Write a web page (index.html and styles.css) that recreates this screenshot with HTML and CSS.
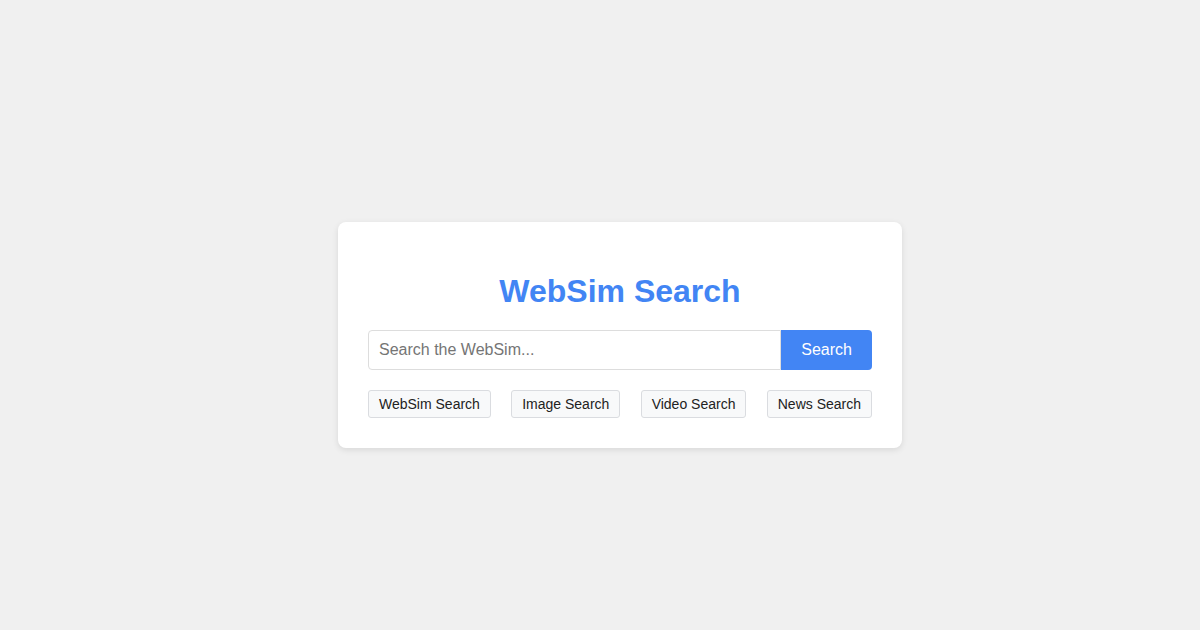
FILE: index.html
```html
<!DOCTYPE html>
<html lang="en">
<head>
    <meta charset="UTF-8">
    <meta name="viewport" content="width=device-width, initial-scale=1.0">
    <title>WebSim Search</title>
    <link rel="stylesheet" href="styles.css">
</head>
<body>
    <div class="container">
        <h1 class="logo">WebSim Search</h1>
        <div class="search-box">
            <input type="text" class="search-input" placeholder="Search the WebSim...">
            <button class="search-btn">Search</button>
        </div>
        <div class="search-types">
            <button class="type-btn">WebSim Search</button>
            <button class="type-btn">Image Search</button>
            <button class="type-btn">Video Search</button>
            <button class="type-btn">News Search</button>
        </div>
    </div>
</body>
</html>
```

FILE: styles.css
```css
body {
    font-family: "Liberation Sans", Arial, sans-serif;
    background-color: #f0f0f0;
    display: flex;
    justify-content: center;
    align-items: center;
    height: 100vh;
    margin: 0;
}
.container {
    background: #fff;
    width: 504px;
    padding: 30px;
    margin: 40px 0 0 40px;
    border-radius: 8px;
    box-shadow: 0 2px 6px rgba(0, 0, 0, 0.1);
}
.logo {
    color: #4285f4;
    font-size: 32px;
    text-align: center;
    margin: 21px 0 20px;
    line-height: 37px;
}
.search-box {
    display: flex;
}
.search-input {
    flex: 1;
    padding: 10px;
    font-size: 16px;
    font-family: inherit;
    border: 1px solid #ddd;
    border-radius: 4px 0 0 4px;
    height: 40px;
    box-sizing: border-box;
    outline: none;
}
.search-input::placeholder {
    color: #757575;
}
.search-btn {
    padding: 10px 20px;
    font-size: 16px;
    font-family: inherit;
    background-color: #4285f4;
    color: #fff;
    border: none;
    border-radius: 0 4px 4px 0;
    height: 40px;
}
.search-types {
    display: flex;
    justify-content: space-between;
    margin-top: 20px;
}
.type-btn {
    padding: 5px 10px;
    font-size: 14px;
    font-family: inherit;
    color: #222;
    background-color: #f8f9fa;
    border: 1px solid #dadce0;
    border-radius: 3px;
    height: 28px;
}
```
